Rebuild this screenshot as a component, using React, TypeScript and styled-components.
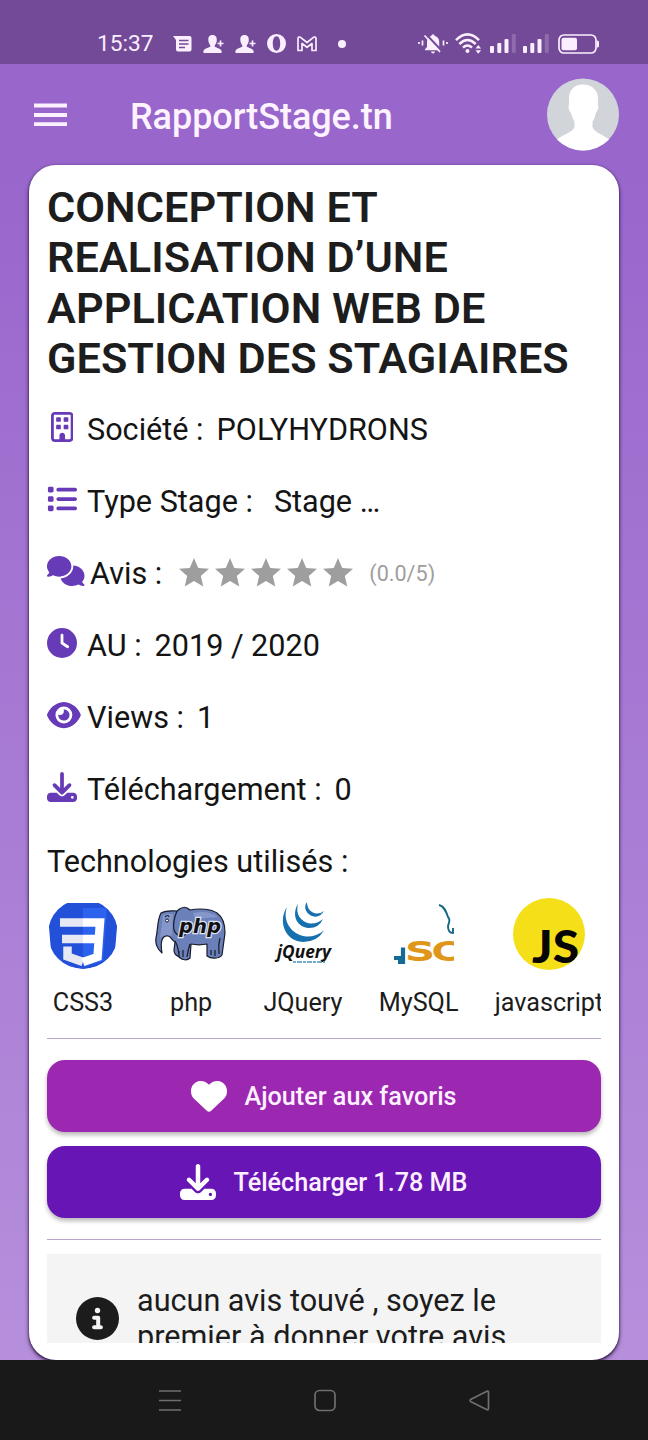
import React from "react";
import styled, { createGlobalStyle } from "styled-components";
import {
  FaRegBuilding,
  FaList,
  FaComments,
  FaClock,
  FaEye,
  FaDownload,
  FaHeart,
  FaCircleInfo,
} from "react-icons/fa6";
import { MdStar } from "react-icons/md";

const Global = createGlobalStyle`
  * { box-sizing: border-box; }
  body { margin: 0; font-family: Roboto, "Liberation Sans", sans-serif; }
  svg { display: block; flex: none; }
`;

const Screen = styled.div`
  width: 648px;
  height: 1440px;
  display: flex;
  flex-direction: column;
  overflow: hidden;
  background: linear-gradient(180deg, #9966cc 0, #9966cc 165px, #b68fdc 1360px);
`;

const StatusBar = styled.header`
  height: 64px;
  flex: none;
  padding: 23px 49px 0 97px;
  display: flex;
  justify-content: space-between;
  align-items: flex-start;
  background: #734a97;
  color: #fbeeff;
`;

const StatusGroup = styled.div<{ $gap: number }>`
  display: flex;
  align-items: center;
  height: 41px;
  gap: ${(p) => p.$gap}px;
`;

const Time = styled.span`
  width: 65px;
  font-size: 22.7px;
  font-weight: 450;
  line-height: 41px;
`;

const Dot = styled.i`
  width: 8px;
  height: 8px;
  margin-left: 10px;
  border-radius: 50%;
  background: currentColor;
`;

const AppBar = styled.nav`
  height: 101px;
  flex: none;
  padding: 0 29px 0 34px;
  display: flex;
  align-items: center;
`;

const BarTitle = styled.h1`
  margin: 5px 0 0 63px;
  flex: 1;
  color: #fdf3ff;
  font-size: 36px;
  font-weight: 500;
  letter-spacing: -0.05px;
`;

const Card = styled.main`
  height: 1195px;
  flex: none;
  margin: 0 29px;
  padding: 17.5px 18px 17px;
  display: flex;
  flex-direction: column;
  background: #fff;
  border-radius: 27px;
  box-shadow: 0 1px 2px rgba(20, 0, 40, 0.6), 0 2px 4px rgba(20, 0, 40, 0.75);
`;

const Title = styled.h2`
  margin: 0 0 8.5px;
  color: #1d1d1d;
  font-size: 43.2px;
  line-height: 50.5px;
  font-weight: 600;
  letter-spacing: 0.05px;
  white-space: nowrap;
`;

const Row = styled.div`
  height: 72px;
  flex: none;
  display: flex;
  align-items: center;
  color: #141414;
  font-size: 30.6px;
  white-space: pre;
`;

const RowIcon = styled.span<{ $slot: number; $glyph: number; $indent?: number }>`
  width: ${(p) => p.$slot}px;
  flex: none;
  padding: 0 0 5px ${(p) => p.$indent ?? 0}px;
  color: #673ab7;
  svg { height: 30px; width: ${(p) => p.$glyph}px; }
`;

const Value = styled.span<{ $gap: number }>`
  margin-left: ${(p) => p.$gap}px;
`;

const Stars = styled.span`
  display: flex;
  margin-left: 14px;
  color: #9e9e9e;
`;

const Score = styled.span`
  margin-left: 13px;
  color: #9e9e9e;
  font-size: 21.6px;
`;

const TechStrip = styled.div`
  display: flex;
  gap: 36.2px;
  height: 142px;
  flex: none;
  padding-top: 1px;
  overflow: hidden;
  border-bottom: 1px solid #b9a5c9;
`;

const Tech = styled.div`
  flex: none;
  min-width: 71px;
  display: flex;
  flex-direction: column;
  align-items: center;
  gap: 18px;
  color: #1c1c1c;
  font-size: 25.2px;
  line-height: 30px;
`;

const Action = styled.button<{ $color: string; $top: number }>`
  height: 72px;
  flex: none;
  margin: ${(p) => p.$top}px 0 0;
  padding: 0;
  display: flex;
  align-items: center;
  justify-content: center;
  gap: 17px;
  border: 0;
  border-radius: 18px;
  background: ${(p) => p.$color};
  box-shadow: 0 3px 4px rgba(0, 0, 0, 0.28);
  color: #fdf0ff;
  font: 500 25.2px Roboto, "Liberation Sans", sans-serif;
  svg { width: 36px; height: 36px; color: #fff; }
`;

const Divider = styled.hr`
  width: 100%;
  flex: none;
  margin: 21px 0 14px;
  border: 0;
  border-top: 1px solid #b9a5c9;
`;

const Notice = styled.section`
  flex: 1;
  min-height: 0;
  overflow: hidden;
  display: flex;
  align-items: flex-start;
  padding: 29px 29px 0;
  background: #f4f4f4;
  color: #1c1c1c;
  svg { width: 43px; height: 43px; margin: 14px 18px 0 0; }
`;

const NoticeText = styled.p`
  margin: 0;
  font-size: 30.6px;
  line-height: 36px;
  white-space: nowrap;
`;

const SystemNav = styled.footer`
  flex: 1;
  padding: 29px 157px 0 158px;
  display: flex;
  justify-content: space-between;
  background: #191919;
`;

const MessageIcon = () => (
  <svg width="19" height="16" viewBox="0 0 19 16">
    <path d="M0 0h16.500Q18.500 0 18.500 2v11.500q0 2-2 2H5q-2 0-2-2V4z" fill="currentColor" />
    <path d="M6 4.500h9.500M6 8h9.500M6 11.500h6" stroke="#734a97" strokeWidth="1.500" />
  </svg>
);

const PersonAddIcon = () => (
  <svg width="21" height="18" viewBox="0 0 21 18">
    <path d="M9.500 0C6 0 5.200 2.500 5.300 5c.1 2.300 1 4 2 5.200v1.600C4 13.200.5 13.800.3 17q0 1 1 1h16.500q1 0 1-1c-.3-3.200-4-3.800-7-5.200v-1.600c1-1.200 2-2.900 2-5.200C13.900 2.500 13 0 9.500 0z" fill="currentColor" />
    <path d="M17.500 5.500v6M14.500 8.500h6" stroke="currentColor" strokeWidth="1.700" />
  </svg>
);

const OperaIcon = () => (
  <svg width="19" height="19" viewBox="0 0 19 19">
    <path fillRule="evenodd" d="M9.500 0a9.500 9.500 0 1 0 0 19a9.500 9.500 0 1 0 0-19zM9.500 2.300c2.500 0 3.700 3.500 3.700 7.200s-1.200 7.200-3.700 7.200s-3.700-3.500-3.700-7.200s1.200-7.200 3.700-7.200z" fill="currentColor" />
  </svg>
);

const MailIcon = () => (
  <svg width="20" height="16" viewBox="0 0 20 16" fill="none" stroke="currentColor" strokeWidth="1.700" strokeLinejoin="round">
    <path d="M1 14.500V2.500q.3-2.200 2.500-1.200L10 6.500l6.500-5.200q2.200-1 2.500 1.200v12h-4V7.500L10 11.300 5 7.500v7z" />
  </svg>
);

const MutedBellIcon = () => (
  <svg width="30" height="21" viewBox="0 0 30 21">
    <path d="M15 1.200q1.500 0 1.600 1.600c3 1 4.600 3.200 4.600 6v5.200l2 2.200v1H7v-1L9 14V8.800c0-2.800 1.400-5 4.400-6Q13.500 1.200 15 1.200zM13 18.500h4q-.3 2-2 2t-2-2z" fill="currentColor" />
    <path d="M7.800 1 24 18" stroke="#734a97" strokeWidth="2" />
    <path d="M6.500 2.500 22 19M1 9v2M4.500 7.500v5M25.500 7.500v5M29 9v2" stroke="currentColor" strokeWidth="1.700" />
  </svg>
);

const WifiIcon = () => (
  <svg width="27" height="21" viewBox="0 0 27 21">
    <g fill="none" stroke="currentColor" strokeWidth="2.500">
      <path d="M1 7.200q11.500-11.500 23 0M4.300 11q8.200-8 16.400 0M8 14.600q4.500-4.200 9 0" />
    </g>
    <circle cx="12.500" cy="18" r="2" fill="currentColor" />
    <path d="M20.500 15.500 23.300 12l2.800 3.500zM20.500 17.200h5.600l-2.800 3.500z" fill="currentColor" />
  </svg>
);

const SignalIcon = () => (
  <svg width="26" height="19" viewBox="0 0 26 19" fill="currentColor">
    <rect x="0" y="12" width="4" height="7" rx="1" />
    <rect x="7.300" y="9" width="4" height="10" rx="1" />
    <rect x="14.500" y="5" width="4" height="14" rx="1" />
    <rect x="21.800" y="0" width="4" height="19" rx="1" opacity=".2" />
  </svg>
);

const BatteryIcon = () => (
  <svg width="42" height="20" viewBox="-1 0 42 20">
    <rect x="1" y="1" width="37" height="18" rx="5" fill="none" stroke="currentColor" strokeWidth="1.700" />
    <rect x="3.500" y="3.700" width="15.500" height="12.600" rx="2" fill="currentColor" />
    <path d="M39 6.500q2 0 2 1.500v4q0 1.500-2 1.500z" fill="currentColor" />
  </svg>
);

const MenuIcon = () => (
  <svg width="33" height="24" viewBox="0 0 33 24">
    <path d="M0 2.500h33M0 12h33M0 21.200h33" stroke="#fdf0ff" strokeWidth="3.800" />
  </svg>
);

const Avatar = () => (
  <svg width="72" height="73" viewBox="0 0 72 73">
    <defs>
      <clipPath id="avatar"><circle cx="36" cy="36.500" r="36" /></clipPath>
    </defs>
    <g clipPath="url(#avatar)">
      <path fill="#d1d5da" d="M0 0h72v73H0z" />
      <path fill="#fff" d="M36 6.500c-9 0-14.500 6-14 15l.2 5c-1.300 1-.8 5.500 1.800 8.500 1 4 2.300 6.500 3.500 8.500v5.500c-1 4.500-10 7-17.500 12.500L0 66v7h72v-7l-10-4.500C54.500 56 46.500 53.500 45.500 49v-5.500c1.500-2 2.500-4.500 3.300-8.500 2.700-3 3.200-7.500 1.900-8.500l.3-5c.5-9-6-15-15-15z" />
    </g>
  </svg>
);

const CssLogo = () => (
  <svg width="72" height="72" viewBox="0 0 72 72">
    <defs>
      <clipPath id="css-disc"><circle cx="36" cy="36" r="35" /></clipPath>
    </defs>
    <g clipPath="url(#css-disc)">
      <path fill="#2350d8" d="M0 5h72l-5 60-31 6.500L5 65z" />
      <path fill="#2c63ee" d="M36 10h24l-4 53-20 6z" />
      <path fill="none" stroke="#e6e9f4" strokeWidth="8.500" d="M13 24.500h23M15 41h21M20.500 48.500v10L36 64" />
      <path fill="none" stroke="#fff" strokeWidth="8.500" d="M36 24.500h17L50.500 59 36 64M36 41h16" />
    </g>
  </svg>
);

const PhpLogo = () => (
  <svg width="72" height="72" viewBox="0 0 72 72">
    <path
      fill="#6b7fb9"
      stroke="#171b2b"
      strokeWidth="1.200"
      strokeLinejoin="round"
      d="M6 15C12 12 17 13 22 13c4-4 9-5 13-1 10-2 21-1 27 3 7 5 8 13 8 20l-3 22c-3 4-11 4-15 1V46c-5 1-11 1-16 0l-1 14c-3 3-8 2-11-1-3-2-5-3-5-7l1-8c-3-1-4-6-7-6-6-1-8 6-6 17C3 52 0 46 1 40 3 32 2 22 6 15z"
    />
    <path fill="#8496ca" d="M8 17q6-2 10-1l-1 22q-6-3-12 2zM38 15q16-3 25 4l-23 2z" />
    <path fill="none" stroke="#171b2b" strokeWidth="1.200" d="M22 13c-3 7-4 14-3 19 3 7 9 8 13 3M10 19q3-3 4 0M20 43q3 5 4 14M35 46q-2 6-3 13M65 40q-2 7-1 14M56 52v5M60 52v6M64 52v4M24 53v6M28 52v7" />
    <circle cx="12" cy="22.500" r="1.500" fill="#fff" stroke="#171b2b" />
    <text x="24" y="35" fontFamily="DejaVu Sans, sans-serif" fontSize="19" fontWeight="700" fontStyle="italic" textLength="42" lengthAdjust="spacingAndGlyphs" fill="#111" stroke="#dfe4f4" strokeWidth="2.400" paintOrder="stroke">php</text>
  </svg>
);

const JQueryLogo = () => (
  <svg width="72" height="72" viewBox="0 0 72 72">
    <g fill="#1670ad">
      <path d="M20 9C15 22 24 37 39 38.500q10 .5 18-6-7 11.500-21 11.500C17 43 11 22 20 9z" />
      <path d="M31 6c-3 10 3 18 12 19.500q7 .5 13-4.500-4 9-14 9C28 29 25 15 31 6z" />
      <path d="M40 4c0 7 4 10.500 9 11.500q4 .5 8-2.500-4 6.500-10 5.500C39 17 36 9 40 4z" />
    </g>
    <text x="10" y="60" fontFamily="Open Sans, sans-serif" fontSize="17" fontWeight="700" fontStyle="italic" textLength="54" lengthAdjust="spacingAndGlyphs" fill="#111">jQuery</text>
    <path d="M26 64h32" stroke="#4b92bb" strokeWidth="1.300" strokeDasharray="3 1 5 1" />
  </svg>
);

const MySqlLogo = () => (
  <svg width="72" height="72" viewBox="0 0 72 72">
    <path fill="none" stroke="#176887" strokeWidth="1.900" strokeLinejoin="round" d="M56 7c5 1 7 6 9 12 3 3 1 5 0 9 0 5 2 7 5 7v-5" />
    <path fill="none" stroke="#146b95" strokeWidth="4.200" d="M20 49.500V64h-5M20 60h-9" />
    <svg x="24" y="40" width="47" height="26" viewBox="0 0 47 26">
      <text x="0" y="22" fontFamily="DejaVu Sans, sans-serif" fontSize="25" textLength="54" lengthAdjust="spacingAndGlyphs" fill="#df961b" stroke="#df961b" strokeWidth="2">SC</text>
    </svg>
  </svg>
);

const JsLogo = () => (
  <svg width="72" height="72" viewBox="0 0 72 72">
    <defs>
      <clipPath id="js-disc"><circle cx="36" cy="36" r="36" /></clipPath>
    </defs>
    <g clipPath="url(#js-disc)">
      <path fill="#f5df19" d="M0 0h72v72H0z" />
      <text x="19" y="65" fontFamily="Lato, sans-serif" fontSize="45" fontWeight="900" textLength="47" lengthAdjust="spacingAndGlyphs" fill="#050505">JS</text>
    </g>
  </svg>
);

const RecentsIcon = () => (
  <svg width="24" height="24" viewBox="0 0 24 24"><path d="M1 2h22M1 11.500h22M1 21h22" stroke="#6f6f6f" strokeWidth="1.700" /></svg>
);
const HomeIcon = () => (
  <svg width="24" height="24" viewBox="0 0 24 24"><rect x="2" y="1.500" width="20" height="20" rx="4.500" fill="none" stroke="#6f6f6f" strokeWidth="1.700" /></svg>
);
const BackIcon = () => (
  <svg width="24" height="24" viewBox="0 0 24 24"><path d="M20 2.200 4 10.300q-2 1.200 0 2.400l16 8q1.500.5 1.500-1.200V3.400q0-1.700-1.500-1.200z" fill="none" stroke="#6f6f6f" strokeWidth="1.700" /></svg>
);

const technologies = [
  { name: "CSS3", Logo: CssLogo },
  { name: "php", Logo: PhpLogo },
  { name: "JQuery", Logo: JQueryLogo },
  { name: "MySQL", Logo: MySqlLogo },
  { name: "javascript", Logo: JsLogo },
];

export default function App() {
  return (
    <Screen>
      <Global />
      <StatusBar>
        <StatusGroup $gap={11}>
          <Time>15:37</Time>
          <MessageIcon />
          <PersonAddIcon />
          <PersonAddIcon />
          <OperaIcon />
          <MailIcon />
          <Dot />
        </StatusGroup>
        <StatusGroup $gap={7.6}>
          <MutedBellIcon />
          <WifiIcon />
          <SignalIcon />
          <SignalIcon />
          <BatteryIcon />
        </StatusGroup>
      </StatusBar>
      <AppBar>
        <MenuIcon />
        <BarTitle>RapportStage.tn</BarTitle>
        <Avatar />
      </AppBar>
      <Card>
        <Title>
          CONCEPTION ET<br />
          REALISATION D’UNE<br />
          APPLICATION WEB DE<br />
          GESTION DES STAGIAIRES
        </Title>
        <Row>
          <RowIcon $slot={40} $glyph={22.5} $indent={3.5}><FaRegBuilding /></RowIcon>
          Société :<Value $gap={13}>POLYHYDRONS</Value>
        </Row>
        <Row>
          <RowIcon $slot={40} $glyph={30}><FaList /></RowIcon>
          Type Stage :<Value $gap={21}>Stage …</Value>
        </Row>
        <Row>
          <RowIcon $slot={43} $glyph={37.5}><FaComments /></RowIcon>
          Avis :
          <Stars>
            {[0, 1, 2, 3, 4].map((n) => <MdStar key={n} size={36} />)}
          </Stars>
          <Score>(0.0/5)</Score>
        </Row>
        <Row>
          <RowIcon $slot={40} $glyph={30}><FaClock /></RowIcon>
          AU :<Value $gap={13}>2019 / 2020</Value>
        </Row>
        <Row>
          <RowIcon $slot={40} $glyph={33.75}><FaEye /></RowIcon>
          Views :<Value $gap={13}>1</Value>
        </Row>
        <Row>
          <RowIcon $slot={40} $glyph={30}><FaDownload /></RowIcon>
          Téléchargement :<Value $gap={13}>0</Value>
        </Row>
        <Row>Technologies utilisés :</Row>
        <TechStrip>
          {technologies.map(({ name, Logo }) => (
            <Tech key={name}><Logo />{name}</Tech>
          ))}
        </TechStrip>
        <Action $color="#9c27b0" $top={21}><FaHeart />Ajouter aux favoris</Action>
        <Action $color="#6716b5" $top={14}><FaDownload />Télécharger 1.78 MB</Action>
        <Divider />
        <Notice>
          <FaCircleInfo />
          <NoticeText>aucun avis touvé , soyez le<br />premier à donner votre avis</NoticeText>
        </Notice>
      </Card>
      <SystemNav>
        <RecentsIcon />
        <HomeIcon />
        <BackIcon />
      </SystemNav>
    </Screen>
  );
}
